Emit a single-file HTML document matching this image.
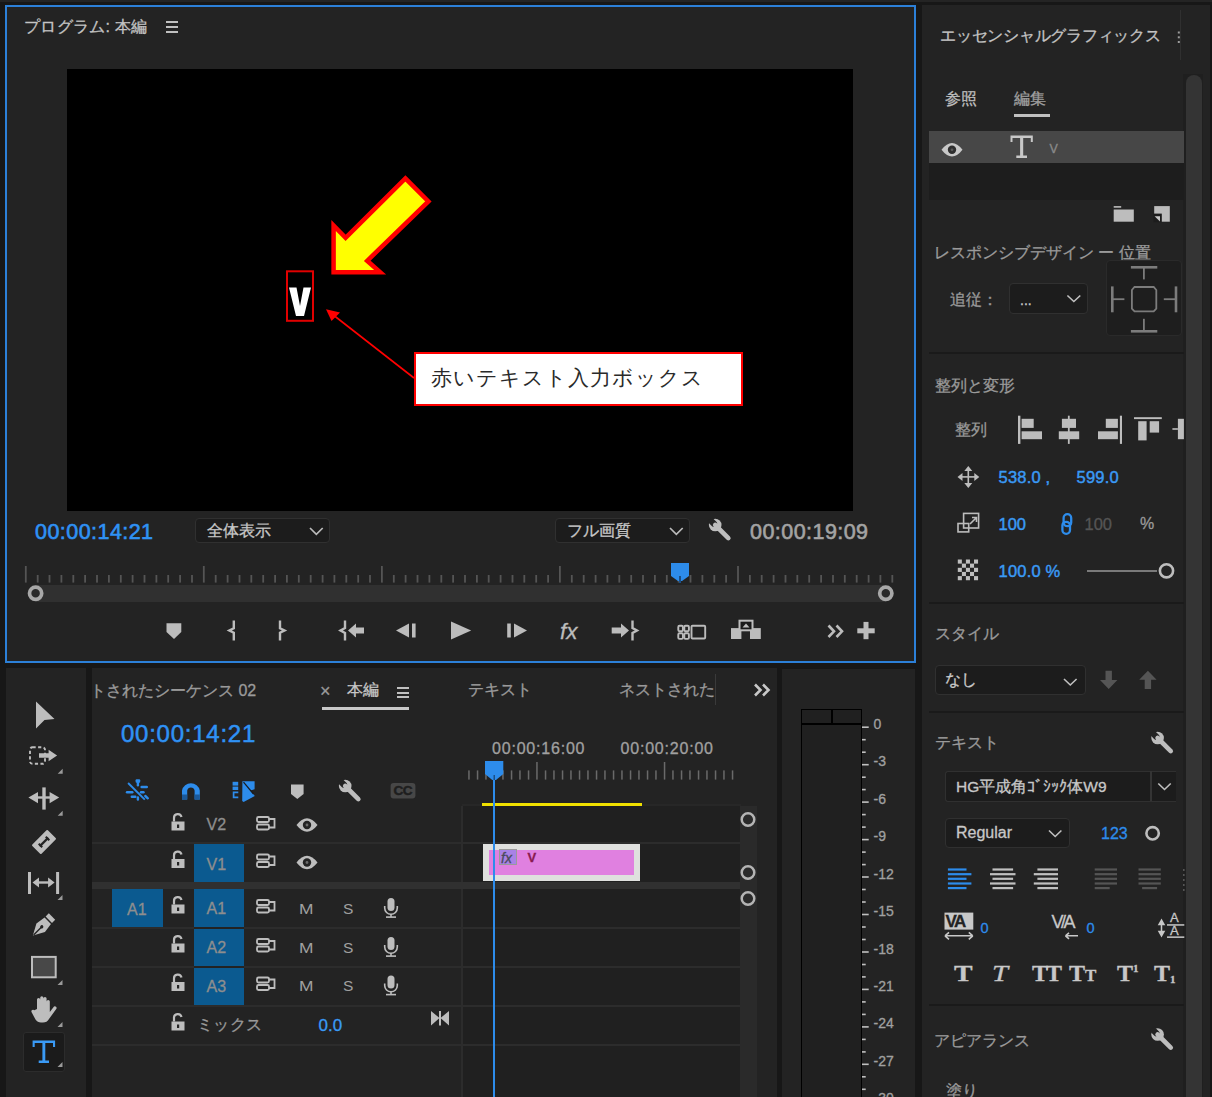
<!DOCTYPE html>
<html><head><meta charset="utf-8">
<style>
*{margin:0;padding:0;box-sizing:border-box}
html,body{width:1212px;height:1097px;overflow:hidden;background:#171717;font-family:"Liberation Sans",sans-serif;color:#9a9a9a}
.a{position:absolute}
.t{position:absolute;white-space:nowrap;line-height:1;-webkit-text-stroke-width:0.3px}
svg{position:absolute;overflow:visible;left:0;top:0}
.dd{position:absolute;background:#1c1c1c;border:1.5px solid #303030;border-radius:4px}
</style></head><body>

<div class="a" style="left:5px;top:4.5px;width:911px;height:658.5px;border:2px solid #2c80d8;background:#232323"></div>
<div class="t" style="left:24px;top:19px;font-size:16px;color:#c4c4c4;letter-spacing:0.3px">プログラム: 本編</div>
<div class="a" style="left:166px;top:21px;width:12px;height:2px;background:#c0c0c0"></div>
<div class="a" style="left:166px;top:26px;width:12px;height:2px;background:#c0c0c0"></div>
<div class="a" style="left:166px;top:31px;width:12px;height:2px;background:#c0c0c0"></div>
<div class="a" style="left:67px;top:69px;width:786px;height:442px;background:#000"></div>
<svg width="1212" height="1097">
<polygon points="405.4,178.4 428.4,201.4 367.2,260.8 380.2,272.3 333.6,272.3 333.6,225.5 345.6,237.8" fill="#ffff00" stroke="#ff0000" stroke-width="4.5" stroke-linejoin="miter" stroke-miterlimit="10"/>
<rect x="287" y="271.3" width="26" height="49.5" fill="none" stroke="#e00000" stroke-width="2"/>
<polygon points="289,287.5 296.5,287.5 300,306 303.5,287.5 311,287.5 304,316 296,316" fill="#ffffff"/>
<line x1="414" y1="378" x2="332" y2="314" stroke="#ff0000" stroke-width="1.6"/>
<polygon points="326,309.3 340,312.5 331.5,321" fill="#ff0000"/>
</svg>
<div class="a" style="left:414px;top:352px;width:329px;height:54px;background:#fff;border:2px solid #ff0000"></div>
<div class="t" style="left:431px;top:367px;font-size:21px;color:#2a2a2a;letter-spacing:1.0px;-webkit-text-stroke-width:0">赤いテキスト入力ボックス</div>
<div class="t" style="left:35px;top:522px;font-size:21.5px;color:#2f92f5;-webkit-text-stroke:0.6px #2f92f5;letter-spacing:0.45px">00:00:14:21</div>
<div class="t" style="left:750px;top:522px;font-size:21.5px;color:#a4a4a4;-webkit-text-stroke:0.6px #a4a4a4;letter-spacing:0.45px">00:00:19:09</div>
<div class="dd" style="left:195px;top:518px;width:135px;height:25px"></div>
<div class="t" style="left:207px;top:523px;font-size:15.5px;color:#c8c8c8">全体表示</div>
<div class="dd" style="left:555px;top:518px;width:135px;height:25px"></div>
<div class="t" style="left:567px;top:523px;font-size:15.5px;color:#c8c8c8">フル画質</div>
<svg width="1212" height="1097"><polyline points="310,528 316.35,534.3 322.7,528" fill="none" stroke="#bbbbbb" stroke-width="1.7"/></svg>
<svg width="1212" height="1097"><polyline points="670,528 676.35,534.3 682.7,528" fill="none" stroke="#bbbbbb" stroke-width="1.7"/></svg>
<svg width="1212" height="1097"><g transform="translate(715.2,525) rotate(45) scale(1.0)"><circle cx="0" cy="0" r="6.3" fill="#bdbdbd"/><path d="M-8,-3.1 H-1.8 Q1.3,-3.1 1.3,0 Q1.3,3.1 -1.8,3.1 H-8 Z" fill="#232323"/><line x1="0" y1="0" x2="18.6" y2="0" stroke="#bdbdbd" stroke-width="4.6" stroke-linecap="round"/></g></svg>
<svg width="1212" height="1097"><rect x="24.9" y="566" width="1.8" height="16.6" fill="#555555"/><rect x="36.8" y="575" width="1.8" height="7.6" fill="#555555"/><rect x="48.6" y="575" width="1.8" height="7.6" fill="#555555"/><rect x="60.5" y="575" width="1.8" height="7.6" fill="#555555"/><rect x="72.4" y="575" width="1.8" height="7.6" fill="#555555"/><rect x="84.2" y="575" width="1.8" height="7.6" fill="#555555"/><rect x="96.1" y="575" width="1.8" height="7.6" fill="#555555"/><rect x="108.0" y="575" width="1.8" height="7.6" fill="#555555"/><rect x="119.9" y="575" width="1.8" height="7.6" fill="#555555"/><rect x="131.7" y="575" width="1.8" height="7.6" fill="#555555"/><rect x="143.6" y="575" width="1.8" height="7.6" fill="#555555"/><rect x="155.5" y="575" width="1.8" height="7.6" fill="#555555"/><rect x="167.3" y="575" width="1.8" height="7.6" fill="#555555"/><rect x="179.2" y="575" width="1.8" height="7.6" fill="#555555"/><rect x="191.1" y="575" width="1.8" height="7.6" fill="#555555"/><rect x="202.9" y="566" width="1.8" height="16.6" fill="#555555"/><rect x="214.8" y="575" width="1.8" height="7.6" fill="#555555"/><rect x="226.7" y="575" width="1.8" height="7.6" fill="#555555"/><rect x="238.6" y="575" width="1.8" height="7.6" fill="#555555"/><rect x="250.4" y="575" width="1.8" height="7.6" fill="#555555"/><rect x="262.3" y="575" width="1.8" height="7.6" fill="#555555"/><rect x="274.2" y="575" width="1.8" height="7.6" fill="#555555"/><rect x="286.0" y="575" width="1.8" height="7.6" fill="#555555"/><rect x="297.9" y="575" width="1.8" height="7.6" fill="#555555"/><rect x="309.8" y="575" width="1.8" height="7.6" fill="#555555"/><rect x="321.7" y="575" width="1.8" height="7.6" fill="#555555"/><rect x="333.5" y="575" width="1.8" height="7.6" fill="#555555"/><rect x="345.4" y="575" width="1.8" height="7.6" fill="#555555"/><rect x="357.3" y="575" width="1.8" height="7.6" fill="#555555"/><rect x="369.1" y="575" width="1.8" height="7.6" fill="#555555"/><rect x="381.0" y="566" width="1.8" height="16.6" fill="#555555"/><rect x="392.9" y="575" width="1.8" height="7.6" fill="#555555"/><rect x="404.7" y="575" width="1.8" height="7.6" fill="#555555"/><rect x="416.6" y="575" width="1.8" height="7.6" fill="#555555"/><rect x="428.5" y="575" width="1.8" height="7.6" fill="#555555"/><rect x="440.4" y="575" width="1.8" height="7.6" fill="#555555"/><rect x="452.2" y="575" width="1.8" height="7.6" fill="#555555"/><rect x="464.1" y="575" width="1.8" height="7.6" fill="#555555"/><rect x="476.0" y="575" width="1.8" height="7.6" fill="#555555"/><rect x="487.8" y="575" width="1.8" height="7.6" fill="#555555"/><rect x="499.7" y="575" width="1.8" height="7.6" fill="#555555"/><rect x="511.6" y="575" width="1.8" height="7.6" fill="#555555"/><rect x="523.4" y="575" width="1.8" height="7.6" fill="#555555"/><rect x="535.3" y="575" width="1.8" height="7.6" fill="#555555"/><rect x="547.2" y="575" width="1.8" height="7.6" fill="#555555"/><rect x="559.0" y="566" width="1.8" height="16.6" fill="#555555"/><rect x="570.9" y="575" width="1.8" height="7.6" fill="#555555"/><rect x="582.8" y="575" width="1.8" height="7.6" fill="#555555"/><rect x="594.7" y="575" width="1.8" height="7.6" fill="#555555"/><rect x="606.5" y="575" width="1.8" height="7.6" fill="#555555"/><rect x="618.4" y="575" width="1.8" height="7.6" fill="#555555"/><rect x="630.3" y="575" width="1.8" height="7.6" fill="#555555"/><rect x="642.1" y="575" width="1.8" height="7.6" fill="#555555"/><rect x="654.0" y="575" width="1.8" height="7.6" fill="#555555"/><rect x="665.9" y="575" width="1.8" height="7.6" fill="#555555"/><rect x="677.7" y="575" width="1.8" height="7.6" fill="#555555"/><rect x="689.6" y="575" width="1.8" height="7.6" fill="#555555"/><rect x="701.5" y="575" width="1.8" height="7.6" fill="#555555"/><rect x="713.4" y="575" width="1.8" height="7.6" fill="#555555"/><rect x="725.2" y="575" width="1.8" height="7.6" fill="#555555"/><rect x="737.1" y="566" width="1.8" height="16.6" fill="#555555"/><rect x="749.0" y="575" width="1.8" height="7.6" fill="#555555"/><rect x="760.8" y="575" width="1.8" height="7.6" fill="#555555"/><rect x="772.7" y="575" width="1.8" height="7.6" fill="#555555"/><rect x="784.6" y="575" width="1.8" height="7.6" fill="#555555"/><rect x="796.4" y="575" width="1.8" height="7.6" fill="#555555"/><rect x="808.3" y="575" width="1.8" height="7.6" fill="#555555"/><rect x="820.2" y="575" width="1.8" height="7.6" fill="#555555"/><rect x="832.1" y="575" width="1.8" height="7.6" fill="#555555"/><rect x="843.9" y="575" width="1.8" height="7.6" fill="#555555"/><rect x="855.8" y="575" width="1.8" height="7.6" fill="#555555"/><rect x="867.7" y="575" width="1.8" height="7.6" fill="#555555"/><rect x="879.5" y="575" width="1.8" height="7.6" fill="#555555"/><rect x="891.4" y="575" width="1.8" height="7.6" fill="#555555"/></svg>
<svg width="1212" height="1097"><path d="M671,563 L689,563 L689,576 L682,581 L678,581 L671,576 Z" fill="#2d8ceb"/><rect x="679" y="576" width="2" height="7" fill="#1b4f85"/></svg>
<div class="a" style="left:35.6px;top:584.5px;width:850px;height:17px;background:#303030"></div>
<svg width="1212" height="1097"><circle cx="35.6" cy="593.3" r="6.1" fill="#2a2a2a" stroke="#a8a8a8" stroke-width="3.7"/><circle cx="885.8" cy="593.3" r="6.1" fill="#2a2a2a" stroke="#a8a8a8" stroke-width="3.7"/></svg>
<svg width="1212" height="1097"><g fill="#bcbcbc"><path d="M166.5,623.3 H181.3 V632 L174,639 L166.5,632 Z"/></g><g fill="none" stroke="#bcbcbc" stroke-width="2.4"><path d="M233.8,620.5 V628.3 L229.3,630.5 L233.8,632.7 V640.5"/><path d="M280,620.5 V628.3 L284.5,630.5 L280,632.7 V640.5"/><path d="M345,620.5 V628 L340.5,630.5 L345,633 V640.5"/><path d="M632.5,620.5 V628 L637,630.5 L632.5,633 V640.5"/></g><g fill="#bcbcbc"><path d="M348,630.5 L356,623.5 V627.5 H364 V633.5 H356 V637.5 Z"/><path d="M629,630.5 L621,623.5 V627.5 H611.7 V633.5 H621 V637.5 Z"/><path d="M396,630.5 L409,623.5 V637.5 Z"/><rect x="412" y="623.5" width="3.6" height="14"/><path d="M451,621.5 L471.2,630.5 L451,639.6 Z"/><rect x="507.2" y="623.5" width="3.6" height="14"/><path d="M514,623.5 L527,630.5 L514,637.5 Z"/></g></svg>
<div class="t" style="left:560px;top:621px;font-size:22.5px;font-style:italic;color:#bcbcbc">fx</div>
<svg width="1212" height="1097"><g fill="none" stroke="#bcbcbc" stroke-width="1.9">
<rect x="678.3" y="625.7" width="4.6" height="5.6" rx="1.2"/><rect x="684.3" y="625.7" width="4.6" height="5.6" rx="1.2"/><rect x="678.3" y="633.3" width="4.6" height="5.6" rx="1.2"/><rect x="684.3" y="633.3" width="4.6" height="5.6" rx="1.2"/>
<rect x="691.5" y="625.7" width="13.7" height="12.8" rx="1"/></g>

<g fill="#bcbcbc"><rect x="731" y="628.1" width="10.4" height="10.9"/><rect x="750" y="628.1" width="10.8" height="10.9"/></g>
<rect x="738.5" y="619.7" width="15" height="11.6" fill="#bcbcbc"/>
<rect x="740.5" y="621.7" width="11" height="7.6" fill="#1a1a1a"/>
<path d="M742.5,627.6 L746,623.6 L749.5,627.6 Z" fill="#bcbcbc"/>
</svg>
<svg width="1212" height="1097"><g fill="none" stroke="#bcbcbc" stroke-width="2.6">
<polyline points="828.5,625.5 834,631.3 828.5,637"/><polyline points="836.5,625.5 842,631.3 836.5,637"/></g>
<rect x="857.3" y="628.3" width="17.4" height="5" fill="#bcbcbc"/><rect x="863.5" y="621.9" width="5" height="17.3" fill="#bcbcbc"/>
</svg>
<div class="a" style="left:6px;top:668px;width:80px;height:429px;background:#232323"></div>
<svg width="1212" height="1097">
<path d="M36,701.5 L54.5,719 L44.5,720 L36,728.5 Z" fill="#bdbdbd"/>
<rect x="30" y="747.3" width="15" height="16.5" rx="2.5" fill="none" stroke="#bdbdbd" stroke-width="1.9" stroke-dasharray="3.2,2.4"/>
<path d="M39,753.3 H48.6 V749.8 L57.1,755.5 L48.6,761.2 V757.7 H39 Z" fill="#bdbdbd"/>
<path d="M57.7,773.7 L62.7,768.7 L62.7,773.7 Z" fill="#9a9a9a"/>
<path d="M28.4,797.6 L38,792 V803.3 Z M59.2,797.6 L49.6,792 V803.3 Z" fill="#bdbdbd"/>
<rect x="36" y="796.3" width="15" height="2.4" fill="#bdbdbd"/>
<rect x="42.3" y="787.4" width="3.4" height="22.2" fill="#bdbdbd"/>
<path d="M57.7,815.7 L62.7,810.7 L62.7,815.7 Z" fill="#9a9a9a"/>
<g transform="translate(44,842) rotate(45)"><rect x="-6.5" y="-11" width="13" height="22" rx="1" fill="#bdbdbd"/><rect x="-1.2" y="-6" width="2.4" height="12" fill="#232323"/><rect x="-2.5" y="-6" width="5" height="2" fill="#232323"/><rect x="-2.5" y="4" width="5" height="2" fill="#232323"/></g>
<rect x="28" y="872" width="3" height="22" fill="#bdbdbd"/><rect x="56.1" y="872" width="3" height="22" fill="#bdbdbd"/>
<path d="M32.5,882.5 L39,877.5 V887.5 Z M54.6,882.5 L48.1,877.5 V887.5 Z" fill="#bdbdbd"/>
<rect x="38" y="881.3" width="11" height="2.4" fill="#bdbdbd"/>
<path d="M57.5,900 L62.5,895 L62.5,900 Z" fill="#9a9a9a"/>
<g transform="translate(43.5,925) rotate(45)"><path d="M-4.5,-6 H4.5 L6,4 L0,15 L-6,4 Z" fill="#bdbdbd"/><rect x="-4.5" y="-12" width="9" height="4.5" fill="#bdbdbd"/><rect x="-0.7" y="1" width="1.4" height="13" fill="#232323"/><circle cx="0" cy="2.5" r="1.6" fill="#232323"/></g>
<rect x="32" y="956.9" width="23.7" height="20.4" fill="#484848" stroke="#bdbdbd" stroke-width="2"/>
<path d="M57.5,985 L62.5,980 L62.5,985 Z" fill="#9a9a9a"/>
<path d="M37,1009 V999.5 a1.6,1.6 0 0 1 3.2,0 V1007 V997.8 a1.6,1.6 0 0 1 3.2,0 V1007 V998.6 a1.6,1.6 0 0 1 3.2,0 V1008 V1001.5 a1.6,1.6 0 0 1 3.2,0 V1012 L54,1006.5 a1.7,1.7 0 0 1 2.4,2.2 L49,1019 Q47,1022.5 43,1022.5 H41 Q37.5,1022.5 35.5,1019.5 L31.5,1012 a1.7,1.7 0 0 1 2.8,-1.8 Z" fill="#bdbdbd"/>
<path d="M57.5,1027 L62.5,1022 L62.5,1027 Z" fill="#9a9a9a"/>
</svg>
<div class="a" style="left:23px;top:1032px;width:42px;height:40px;background:#1b1b1b;border:1px solid #2c2c2c;border-radius:3px"></div>
<svg width="1212" height="1097">
<path d="M32.6,1040.5 H55.1 V1047 H53 V1043 H45.3 V1060.5 H49 V1063 H38.7 V1060.5 H42.4 V1043 H34.7 V1047 H32.6 Z" fill="#3a9af5"/>
<path d="M57.5,1067 L62.5,1062 L62.5,1067 Z" fill="#9a9a9a"/>
</svg>
<div class="a" style="left:0;top:0;width:1212px;height:1.5px;background:#242424"></div>
<div class="a" style="left:92px;top:668px;width:684.5px;height:429px;background:#232323"></div>
<div class="t" style="left:90px;top:683px;font-size:16px;color:#9a9a9a">トされたシーケンス 02</div>
<div class="t" style="left:320px;top:682px;font-size:18px;color:#9a9a9a">×</div>
<div class="t" style="left:347px;top:682px;font-size:16px;color:#c8c8c8">本編</div>
<div class="a" style="left:397px;top:687px;width:12px;height:2px;background:#c0c0c0"></div>
<div class="a" style="left:397px;top:691.5px;width:12px;height:2px;background:#c0c0c0"></div>
<div class="a" style="left:397px;top:696px;width:12px;height:2px;background:#c0c0c0"></div>
<div class="a" style="left:322px;top:707px;width:87px;height:3px;background:#c8c8c8"></div>
<div class="t" style="left:468px;top:682px;font-size:16px;color:#9a9a9a">テキスト</div>
<div class="a" style="left:619px;top:674px;width:96px;height:32px;overflow:hidden"><div class="t" style="left:0;top:8px;font-size:16px;color:#9a9a9a">ネストされたシ</div></div>
<div class="a" style="left:715px;top:674px;width:1px;height:31px;background:#3a3a3a"></div>
<svg width="1212" height="1097"><g fill="none" stroke="#c8c8c8" stroke-width="2.6">
<polyline points="755,684.5 760.5,690 755,695.5"/><polyline points="763,684.5 768.5,690 763,695.5"/></g></svg>
<div class="t" style="left:121px;top:721.5px;font-size:24px;color:#2f92f5;letter-spacing:0.75px;-webkit-text-stroke:0.5px #2f92f5">00:00:14:21</div>
<svg width="1212" height="1097">
<g stroke="#2d8ceb" stroke-width="2.4" stroke-linecap="round" fill="none">
<line x1="137.9" y1="781.5" x2="137.9" y2="785.3"/>
<line x1="141.6" y1="787" x2="146.8" y2="787"/>
<line x1="127" y1="792.2" x2="132.3" y2="792.2"/>
<line x1="141" y1="792.2" x2="143.5" y2="792.2"/>
<line x1="131.8" y1="796.8" x2="135.3" y2="796.8"/>
<line x1="137.9" y1="797.5" x2="137.9" y2="799.5"/>
<line x1="145.3" y1="796" x2="147.8" y2="798.3"/>
</g>
<rect x="135.6" y="779.3" width="4.6" height="3.4" rx="1" fill="#2d8ceb"/>
<line x1="128.1" y1="783" x2="144.8" y2="799.7" stroke="#2d8ceb" stroke-width="1.9"/>
<path d="M182,799.5 V790.5 A9.1,9.1 0 0 1 199.8,790.5 V799.5 H194.6 V790.5 A3.8,3.8 0 0 0 187.2,790.5 V799.5 Z" fill="#2d8ceb"/>
<rect x="182" y="794.5" width="5.2" height="5" fill="#1b5a9c"/><rect x="194.6" y="794.5" width="5.2" height="5" fill="#1b5a9c"/>
<rect x="232.6" y="781.8" width="5.6" height="3.8" fill="#2d8ceb"/><rect x="232.6" y="786.6" width="5.6" height="3.4" fill="#2d8ceb"/>
<path d="M238.3,792.3 H233.6 V797.3 H238.3" fill="none" stroke="#2d8ceb" stroke-width="1.7"/>
<path d="M242.4,781.2 H254.6 V789.3 L250.5,790.5 L254.8,796 L243.6,802 L242.2,801 Z" fill="#2d8ceb"/>
<line x1="243.5" y1="782.2" x2="253.5" y2="794" stroke="#1a1a1a" stroke-width="1.2"/>
<path d="M291,784.4 H303.6 V794 L297.3,799 L291,794 Z" fill="#bdbdbd"/>
<rect x="390.6" y="783.1" width="24.8" height="15.3" rx="3" fill="#474747"/>
</svg>
<svg width="1212" height="1097"><g transform="translate(345.2,786) rotate(45) scale(1.0)"><circle cx="0" cy="0" r="6.3" fill="#bdbdbd"/><path d="M-8,-3.1 H-1.8 Q1.3,-3.1 1.3,0 Q1.3,3.1 -1.8,3.1 H-8 Z" fill="#232323"/><line x1="0" y1="0" x2="18.6" y2="0" stroke="#bdbdbd" stroke-width="4.6" stroke-linecap="round"/></g></svg>
<div class="t" style="left:393.5px;top:784px;font-size:13.5px;font-weight:bold;color:#1e1e1e;letter-spacing:-0.5px;-webkit-text-stroke:0.5px #1e1e1e">CC</div>
<div class="t" style="left:492px;top:741px;font-size:16px;color:#a0a0a0;letter-spacing:0.8px">00:00:16:00</div>
<div class="t" style="left:620.5px;top:741px;font-size:16px;color:#a0a0a0;letter-spacing:0.8px">00:00:20:00</div>
<svg width="1212" height="1097"><rect x="468.2" y="770.4" width="1.5" height="9.2" fill="#6a6a6a"/><rect x="476.8" y="770.4" width="1.5" height="9.2" fill="#6a6a6a"/><rect x="485.2" y="770.4" width="1.5" height="9.2" fill="#6a6a6a"/><rect x="493.8" y="770.4" width="1.5" height="9.2" fill="#6a6a6a"/><rect x="502.2" y="770.4" width="1.5" height="9.2" fill="#6a6a6a"/><rect x="510.8" y="770.4" width="1.5" height="9.2" fill="#6a6a6a"/><rect x="519.2" y="770.4" width="1.5" height="9.2" fill="#6a6a6a"/><rect x="527.8" y="770.4" width="1.5" height="9.2" fill="#6a6a6a"/><rect x="536.2" y="762" width="1.5" height="17.6" fill="#6a6a6a"/><rect x="544.8" y="770.4" width="1.5" height="9.2" fill="#6a6a6a"/><rect x="553.2" y="770.4" width="1.5" height="9.2" fill="#6a6a6a"/><rect x="561.8" y="770.4" width="1.5" height="9.2" fill="#6a6a6a"/><rect x="570.2" y="770.4" width="1.5" height="9.2" fill="#6a6a6a"/><rect x="578.8" y="770.4" width="1.5" height="9.2" fill="#6a6a6a"/><rect x="587.2" y="770.4" width="1.5" height="9.2" fill="#6a6a6a"/><rect x="595.8" y="770.4" width="1.5" height="9.2" fill="#6a6a6a"/><rect x="604.2" y="770.4" width="1.5" height="9.2" fill="#6a6a6a"/><rect x="612.8" y="770.4" width="1.5" height="9.2" fill="#6a6a6a"/><rect x="621.2" y="770.4" width="1.5" height="9.2" fill="#6a6a6a"/><rect x="629.8" y="770.4" width="1.5" height="9.2" fill="#6a6a6a"/><rect x="638.2" y="770.4" width="1.5" height="9.2" fill="#6a6a6a"/><rect x="646.8" y="770.4" width="1.5" height="9.2" fill="#6a6a6a"/><rect x="655.2" y="770.4" width="1.5" height="9.2" fill="#6a6a6a"/><rect x="663.8" y="762" width="1.5" height="17.6" fill="#6a6a6a"/><rect x="672.2" y="770.4" width="1.5" height="9.2" fill="#6a6a6a"/><rect x="680.8" y="770.4" width="1.5" height="9.2" fill="#6a6a6a"/><rect x="689.2" y="770.4" width="1.5" height="9.2" fill="#6a6a6a"/><rect x="697.8" y="770.4" width="1.5" height="9.2" fill="#6a6a6a"/><rect x="706.2" y="770.4" width="1.5" height="9.2" fill="#6a6a6a"/><rect x="714.8" y="770.4" width="1.5" height="9.2" fill="#6a6a6a"/><rect x="723.2" y="770.4" width="1.5" height="9.2" fill="#6a6a6a"/><rect x="731.8" y="770.4" width="1.5" height="9.2" fill="#6a6a6a"/></svg>
<div class="a" style="left:92px;top:806px;width:371px;height:291px;background:#232323"></div>
<div class="a" style="left:462px;top:806px;width:279px;height:291px;background:#202020"></div>
<div class="a" style="left:460.6px;top:805.8px;width:2px;height:291px;background:#2c2c2c"></div>
<div class="a" style="left:462px;top:804.2px;width:279px;height:1.6px;background:#272727"></div>
<div class="a" style="left:92px;top:842px;width:649px;height:1.7px;background:#2c2c2c"></div>
<div class="a" style="left:92px;top:927px;width:649px;height:1.7px;background:#2c2c2c"></div>
<div class="a" style="left:92px;top:966px;width:649px;height:1.7px;background:#2c2c2c"></div>
<div class="a" style="left:92px;top:1005px;width:649px;height:1.7px;background:#2c2c2c"></div>
<div class="a" style="left:92px;top:1044px;width:649px;height:1.7px;background:#2c2c2c"></div>
<div class="a" style="left:92px;top:881.5px;width:665px;height:7px;background:#303030"></div>
<div class="a" style="left:194px;top:843.5px;width:50px;height:38px;background:#0b5a90"></div>
<div class="a" style="left:112px;top:889px;width:50.5px;height:37.5px;background:#0b5a90"></div>
<div class="a" style="left:194px;top:889px;width:50px;height:115.5px;background:#0b5a90"></div>
<div class="a" style="left:194px;top:927px;width:50px;height:1.5px;background:#232323"></div>
<div class="a" style="left:194px;top:966px;width:50px;height:1.5px;background:#232323"></div>
<svg width="1212" height="1097"><path d="M174.0,821.5 V818.0 A3.8,3.8 0 0 1 181.5,817.0" fill="none" stroke="#bdbdbd" stroke-width="2.2"/><rect x="171.5" y="821.5" width="13" height="9" fill="#bdbdbd"/><rect x="177.0" y="824.5" width="2.2" height="3.5" fill="#232323"/><g fill="none" stroke="#bdbdbd" stroke-width="1.8"><rect x="257" y="817.0" width="12" height="5" rx="1.5"/><rect x="257" y="824.5" width="12" height="5" rx="1.5"/><path d="M269,819.0 H274.5 V827.5 H269"/></g><path d="M296.5,825.0 Q307.0,811.5 317.5,825.0 Q307.0,838.5 296.5,825.0 Z" fill="#bdbdbd"/><circle cx="307.0" cy="825.0" r="4.2" fill="#232323"/><circle cx="307.0" cy="825.0" r="1.4" fill="#6a6a6a"/><path d="M174.0,859.0 V855.5 A3.8,3.8 0 0 1 181.5,854.5" fill="none" stroke="#bdbdbd" stroke-width="2.2"/><rect x="171.5" y="859.0" width="13" height="9" fill="#bdbdbd"/><rect x="177.0" y="862.0" width="2.2" height="3.5" fill="#232323"/><g fill="none" stroke="#bdbdbd" stroke-width="1.8"><rect x="257" y="854.5" width="12" height="5" rx="1.5"/><rect x="257" y="862.0" width="12" height="5" rx="1.5"/><path d="M269,856.5 H274.5 V865.0 H269"/></g><path d="M296.5,862.5 Q307.0,849.0 317.5,862.5 Q307.0,876.0 296.5,862.5 Z" fill="#bdbdbd"/><circle cx="307.0" cy="862.5" r="4.2" fill="#232323"/><circle cx="307.0" cy="862.5" r="1.4" fill="#6a6a6a"/><path d="M174.0,904.5 V901.0 A3.8,3.8 0 0 1 181.5,900.0" fill="none" stroke="#bdbdbd" stroke-width="2.2"/><rect x="171.5" y="904.5" width="13" height="9" fill="#bdbdbd"/><rect x="177.0" y="907.5" width="2.2" height="3.5" fill="#232323"/><g fill="none" stroke="#bdbdbd" stroke-width="1.8"><rect x="257" y="900.0" width="12" height="5" rx="1.5"/><rect x="257" y="907.5" width="12" height="5" rx="1.5"/><path d="M269,902.0 H274.5 V910.5 H269"/></g><rect x="387.5" y="898.0" width="7" height="13" rx="3.5" fill="#bdbdbd"/><path d="M384.7,906.0 V908.0 A6.3,6.3 0 0 0 397.3,908.0 V906.0" fill="none" stroke="#bdbdbd" stroke-width="1.6"/><rect x="390.2" y="914.0" width="1.6" height="3" fill="#bdbdbd"/><rect x="386.0" y="916.3" width="10" height="1.6" fill="#bdbdbd"/><path d="M174.0,943.5 V940.0 A3.8,3.8 0 0 1 181.5,939.0" fill="none" stroke="#bdbdbd" stroke-width="2.2"/><rect x="171.5" y="943.5" width="13" height="9" fill="#bdbdbd"/><rect x="177.0" y="946.5" width="2.2" height="3.5" fill="#232323"/><g fill="none" stroke="#bdbdbd" stroke-width="1.8"><rect x="257" y="939.0" width="12" height="5" rx="1.5"/><rect x="257" y="946.5" width="12" height="5" rx="1.5"/><path d="M269,941.0 H274.5 V949.5 H269"/></g><rect x="387.5" y="937.0" width="7" height="13" rx="3.5" fill="#bdbdbd"/><path d="M384.7,945.0 V947.0 A6.3,6.3 0 0 0 397.3,947.0 V945.0" fill="none" stroke="#bdbdbd" stroke-width="1.6"/><rect x="390.2" y="953.0" width="1.6" height="3" fill="#bdbdbd"/><rect x="386.0" y="955.3" width="10" height="1.6" fill="#bdbdbd"/><path d="M174.0,982.0 V978.5 A3.8,3.8 0 0 1 181.5,977.5" fill="none" stroke="#bdbdbd" stroke-width="2.2"/><rect x="171.5" y="982.0" width="13" height="9" fill="#bdbdbd"/><rect x="177.0" y="985.0" width="2.2" height="3.5" fill="#232323"/><g fill="none" stroke="#bdbdbd" stroke-width="1.8"><rect x="257" y="977.5" width="12" height="5" rx="1.5"/><rect x="257" y="985.0" width="12" height="5" rx="1.5"/><path d="M269,979.5 H274.5 V988.0 H269"/></g><rect x="387.5" y="975.5" width="7" height="13" rx="3.5" fill="#bdbdbd"/><path d="M384.7,983.5 V985.5 A6.3,6.3 0 0 0 397.3,985.5 V983.5" fill="none" stroke="#bdbdbd" stroke-width="1.6"/><rect x="390.2" y="991.5" width="1.6" height="3" fill="#bdbdbd"/><rect x="386.0" y="993.8" width="10" height="1.6" fill="#bdbdbd"/><path d="M174.0,1021.5 V1018.0 A3.8,3.8 0 0 1 181.5,1017.0" fill="none" stroke="#bdbdbd" stroke-width="2.2"/><rect x="171.5" y="1021.5" width="13" height="9" fill="#bdbdbd"/><rect x="177.0" y="1024.5" width="2.2" height="3.5" fill="#232323"/></svg>
<div class="t" style="left:206.5px;top:817.2px;font-size:16px;color:#8e8e8e">V2</div>
<div class="t" style="left:206.5px;top:856.5px;font-size:16px;color:#8e8e8e">V1</div>
<div class="t" style="left:206.5px;top:901.0px;font-size:16px;color:#8e8e8e">A1</div>
<div class="t" style="left:299px;top:900.5px;font-size:15.5px;color:#a0a0a0;-webkit-text-stroke-width:0;transform:scaleX(1.12);transform-origin:0 0">M</div>
<div class="t" style="left:343px;top:900.5px;font-size:15.5px;color:#a0a0a0;-webkit-text-stroke-width:0">S</div>
<div class="t" style="left:206.5px;top:940.0px;font-size:16px;color:#8e8e8e">A2</div>
<div class="t" style="left:299px;top:939.5px;font-size:15.5px;color:#a0a0a0;-webkit-text-stroke-width:0;transform:scaleX(1.12);transform-origin:0 0">M</div>
<div class="t" style="left:343px;top:939.5px;font-size:15.5px;color:#a0a0a0;-webkit-text-stroke-width:0">S</div>
<div class="t" style="left:206.5px;top:978.5px;font-size:16px;color:#8e8e8e">A3</div>
<div class="t" style="left:299px;top:978.0px;font-size:15.5px;color:#a0a0a0;-webkit-text-stroke-width:0;transform:scaleX(1.12);transform-origin:0 0">M</div>
<div class="t" style="left:343px;top:978.0px;font-size:15.5px;color:#a0a0a0;-webkit-text-stroke-width:0">S</div>
<div class="t" style="left:127px;top:901.5px;font-size:16px;color:#8e8e8e">A1</div>
<div class="t" style="left:197px;top:1017px;font-size:16px;color:#9a9a9a;letter-spacing:0.3px">ミックス</div>
<div class="t" style="left:318.5px;top:1017px;font-size:17px;color:#3a9af5">0.0</div>
<svg width="1212" height="1097"><path d="M431,1011 L439.5,1018 L431,1025.5 Z M449,1011 L440.5,1018 L449,1025.5 Z" fill="#bdbdbd"/><rect x="439" y="1011" width="2" height="14.5" fill="#bdbdbd"/></svg>
<div class="a" style="left:740px;top:806px;width:17px;height:291px;background:#2a2a2a"></div>
<svg width="1212" height="1097"><circle cx="748" cy="819.5" r="6.3" fill="#2a2a2a" stroke="#b4b4b4" stroke-width="2.5"/><circle cx="748" cy="872.5" r="6.3" fill="#2a2a2a" stroke="#b4b4b4" stroke-width="2.5"/><circle cx="748" cy="898.5" r="6.3" fill="#2a2a2a" stroke="#b4b4b4" stroke-width="2.5"/></svg>
<div class="a" style="left:482px;top:802.5px;width:160px;height:3.5px;background:#f0e000"></div>
<div class="a" style="left:482.5px;top:843.7px;width:157.8px;height:37.5px;background:#dfe0de"></div>
<div class="a" style="left:488.7px;top:849.9px;width:145.4px;height:24.8px;background:#e080e0"></div>
<div class="a" style="left:498.8px;top:849.1px;width:18.4px;height:16.2px;background:#a882e6;border:1px solid #9a9a9a"></div>
<div class="t" style="left:501px;top:850.5px;font-size:14px;font-style:italic;color:#4a4a5a">fx</div>
<div class="t" style="left:527.5px;top:850.5px;font-size:13px;font-weight:bold;color:#8a1a50">V</div>
<div class="a" style="left:493.3px;top:770px;width:2px;height:327px;background:#2d8ceb"></div>
<svg width="1212" height="1097"><path d="M485,761 H503.3 V774 L496,780 H492.3 L485,774 Z" fill="#2d8ceb"/><rect x="493.5" y="775" width="1.5" height="5" fill="#1b4f85"/></svg>
<div class="a" style="left:782px;top:668.5px;width:132.7px;height:429px;background:#232323"></div>
<div class="a" style="left:801.4px;top:709.4px;width:60.7px;height:400px;background:#202020;border:1.6px solid #000"></div>
<div class="a" style="left:801.4px;top:723.3px;width:60.7px;height:1.6px;background:#000"></div>
<div class="a" style="left:830.8px;top:709.4px;width:1.8px;height:15px;background:#000"></div>
<svg width="1212" height="1097"><rect x="862" y="726.4" width="6.7" height="1.6" fill="#c0c0c0"/><rect x="862" y="738.9" width="3.7" height="1.6" fill="#c0c0c0"/><rect x="862" y="751.4" width="3.7" height="1.6" fill="#c0c0c0"/><rect x="862" y="763.9" width="6.7" height="1.6" fill="#c0c0c0"/><rect x="862" y="776.4" width="3.7" height="1.6" fill="#c0c0c0"/><rect x="862" y="788.8" width="3.7" height="1.6" fill="#c0c0c0"/><rect x="862" y="801.3" width="6.7" height="1.6" fill="#c0c0c0"/><rect x="862" y="813.8" width="3.7" height="1.6" fill="#c0c0c0"/><rect x="862" y="826.3" width="3.7" height="1.6" fill="#c0c0c0"/><rect x="862" y="838.8" width="6.7" height="1.6" fill="#c0c0c0"/><rect x="862" y="851.3" width="3.7" height="1.6" fill="#c0c0c0"/><rect x="862" y="863.8" width="3.7" height="1.6" fill="#c0c0c0"/><rect x="862" y="876.2" width="6.7" height="1.6" fill="#c0c0c0"/><rect x="862" y="888.7" width="3.7" height="1.6" fill="#c0c0c0"/><rect x="862" y="901.2" width="3.7" height="1.6" fill="#c0c0c0"/><rect x="862" y="913.7" width="6.7" height="1.6" fill="#c0c0c0"/><rect x="862" y="926.2" width="3.7" height="1.6" fill="#c0c0c0"/><rect x="862" y="938.7" width="3.7" height="1.6" fill="#c0c0c0"/><rect x="862" y="951.2" width="6.7" height="1.6" fill="#c0c0c0"/><rect x="862" y="963.7" width="3.7" height="1.6" fill="#c0c0c0"/><rect x="862" y="976.1" width="3.7" height="1.6" fill="#c0c0c0"/><rect x="862" y="988.6" width="6.7" height="1.6" fill="#c0c0c0"/><rect x="862" y="1001.1" width="3.7" height="1.6" fill="#c0c0c0"/><rect x="862" y="1013.6" width="3.7" height="1.6" fill="#c0c0c0"/><rect x="862" y="1026.1" width="6.7" height="1.6" fill="#c0c0c0"/><rect x="862" y="1038.6" width="3.7" height="1.6" fill="#c0c0c0"/><rect x="862" y="1051.1" width="3.7" height="1.6" fill="#c0c0c0"/><rect x="862" y="1063.5" width="6.7" height="1.6" fill="#c0c0c0"/><rect x="862" y="1076.0" width="3.7" height="1.6" fill="#c0c0c0"/><rect x="862" y="1088.5" width="3.7" height="1.6" fill="#c0c0c0"/><rect x="862" y="1101.0" width="6.7" height="1.6" fill="#c0c0c0"/><rect x="862" y="1113.5" width="3.7" height="1.6" fill="#c0c0c0"/><rect x="862" y="1126.0" width="3.7" height="1.6" fill="#c0c0c0"/></svg>
<div class="t" style="left:873.5px;top:716.7px;font-size:14px;color:#a0a0a0">0</div>
<div class="t" style="left:873.5px;top:754.2px;font-size:14px;color:#a0a0a0">-3</div>
<div class="t" style="left:873.5px;top:791.6px;font-size:14px;color:#a0a0a0">-6</div>
<div class="t" style="left:873.5px;top:829.1px;font-size:14px;color:#a0a0a0">-9</div>
<div class="t" style="left:873.5px;top:866.5px;font-size:14px;color:#a0a0a0">-12</div>
<div class="t" style="left:873.5px;top:904.0px;font-size:14px;color:#a0a0a0">-15</div>
<div class="t" style="left:873.5px;top:941.5px;font-size:14px;color:#a0a0a0">-18</div>
<div class="t" style="left:873.5px;top:978.9px;font-size:14px;color:#a0a0a0">-21</div>
<div class="t" style="left:873.5px;top:1016.4px;font-size:14px;color:#a0a0a0">-24</div>
<div class="t" style="left:873.5px;top:1053.8px;font-size:14px;color:#a0a0a0">-27</div>
<div class="t" style="left:873.5px;top:1091.3px;font-size:14px;color:#a0a0a0">-30</div>
<div class="a" style="left:921.8px;top:5px;width:288.2px;height:1092px;background:#232323"></div>
<div class="t" style="left:940px;top:28px;font-size:16px;color:#c4c4c4;letter-spacing:-0.25px">エッセンシャルグラフィックス</div>
<div class="a" style="left:1179.5px;top:10px;width:1px;height:50px;background:#303030"></div>
<svg width="1212" height="1097"><g fill="#9c9c9c"><rect x="1177.8" y="31.5" width="2" height="2"/><rect x="1177.8" y="36.3" width="2" height="2"/><rect x="1177.8" y="41" width="2" height="2"/></g></svg>
<div class="a" style="left:1183.4px;top:74px;width:19.7px;height:1023px;background:#1f1f1f"></div>
<div class="a" style="left:1185.5px;top:75px;width:16.1px;height:1022px;background:#343434;border-radius:8px 8px 0 0"></div>
<div class="t" style="left:945px;top:91px;font-size:16px;color:#bdbdbd">参照</div>
<div class="t" style="left:1014px;top:91px;font-size:16px;color:#a0a0a0">編集</div>
<div class="a" style="left:1013.5px;top:114px;width:36px;height:2.8px;background:#c0c0c0"></div>
<div class="a" style="left:929px;top:130.5px;width:255px;height:32px;background:#474747"></div>
<div class="a" style="left:929px;top:162.5px;width:255px;height:37px;background:#1d1d1d"></div>
<svg width="1212" height="1097"><path d="M941.5,149.8 Q952.0,136.3 962.5,149.8 Q952.0,163.3 941.5,149.8 Z" fill="#c8c8c8"/><circle cx="952.0" cy="149.8" r="4.2" fill="#2e2e2e"/><circle cx="952.0" cy="149.8" r="1.4" fill="#5a5a5a"/></svg>
<svg width="1212" height="1097"><path d="M1010.5,135.6 H1032.8 V142 H1030.8 V138 H1023.2 V155.5 H1027 V158 H1016.3 V155.5 H1020.1 V138 H1012.5 V142 H1010.5 Z" fill="#c8c8c8"/></svg>
<div class="t" style="left:1049.5px;top:142.5px;font-size:12.5px;color:#8a8a8a">V</div>
<svg width="1212" height="1097"><rect x="1113.7" y="206.1" width="7.5" height="1.6" fill="#bdbdbd"/><rect x="1113.7" y="209.5" width="20.1" height="12.2" fill="#bdbdbd"/><rect x="1154.2" y="206.1" width="15.6" height="15.6" fill="#bdbdbd"/><rect x="1153.5" y="213.6" width="8.3" height="8.6" fill="#1c1c1c"/><path d="M1154.6,216.2 H1160 V221.6 Z" fill="#c8c8c8"/></svg>
<div class="t" style="left:934px;top:245px;font-size:16px;color:#9a9a9a">レスポンシブデザイン ー 位置</div>
<div class="t" style="left:950px;top:291.5px;font-size:16px;color:#9a9a9a">追従：</div>
<div class="dd" style="left:1009px;top:283px;width:79px;height:31px"></div>
<div class="t" style="left:1020px;top:293px;font-size:14px;color:#c8c8c8">...</div>
<svg width="1212" height="1097"><polyline points="1067.4,295.5 1073.8500000000001,301.5 1080.3000000000002,295.5" fill="none" stroke="#c0c0c0" stroke-width="1.6"/></svg>
<div class="a" style="left:1105.8px;top:260.4px;width:76.6px;height:75.3px;background:#1e1e1e;border:1px solid #2a2a2a;border-radius:4px"></div>
<svg width="1212" height="1097"><g fill="#7c7c7c">
<rect x="1130.9" y="266" width="26.4" height="2.6"/><rect x="1143" y="268" width="1.8" height="11.4"/>
<rect x="1130.9" y="330" width="26.4" height="2.6"/><rect x="1143" y="318.8" width="1.8" height="11.4"/>
<rect x="1111" y="286.4" width="2.6" height="25.9"/><rect x="1113" y="298.3" width="11.4" height="1.8"/>
<rect x="1174.7" y="286.4" width="2.6" height="25.9"/><rect x="1163.8" y="298.3" width="11.4" height="1.8"/>
</g><path d="M1134.5,287 H1153.7 L1156.3,290 V308.6 L1153.7,311.3 H1134.5 L1131.9,308.6 V290 Z" fill="none" stroke="#7c7c7c" stroke-width="1.8"/></svg>
<div class="a" style="left:929px;top:351.5px;width:255px;height:2px;background:#1a1a1a"></div>
<div class="t" style="left:935px;top:378px;font-size:16px;color:#9a9a9a">整列と変形</div>
<div class="t" style="left:955px;top:422px;font-size:16px;color:#9a9a9a">整列</div>
<svg width="1212" height="1097"><g fill="#bdbdbd">
<rect x="1018" y="415.7" width="2.4" height="28.2"/><rect x="1021.6" y="418.8" width="12.1" height="9.1"/><rect x="1021.6" y="431.3" width="20.4" height="7.9"/>
<rect x="1067.9" y="415.7" width="1.8" height="28.2"/><rect x="1061.9" y="418.8" width="14.1" height="9.1"/><rect x="1058.8" y="431.3" width="20.4" height="7.9"/>
<rect x="1119.9" y="415.7" width="2.1" height="28.2"/><rect x="1105.8" y="418.8" width="12.1" height="9.1"/><rect x="1098" y="431.3" width="19.9" height="7.9"/>
<rect x="1134" y="417.2" width="27.8" height="1.9"/><rect x="1138.2" y="421.2" width="8.4" height="19.2"/><rect x="1149.7" y="421.2" width="9.4" height="11.4"/>
<rect x="1172.4" y="428.2" width="5.5" height="1.6"/><rect x="1177.9" y="418.8" width="6" height="20.4"/>
</g></svg>
<svg width="1212" height="1097"><g fill="#bdbdbd">
<rect x="967.5" y="470" width="1.6" height="14"/><rect x="961.5" y="476.1" width="14" height="1.6"/>
<path d="M968.3,466 L972.3,471 H964.3 Z M968.3,488 L972.3,483 H964.3 Z M957.5,476.9 L962.5,472.9 V480.9 Z M979.3,476.9 L974.3,472.9 V480.9 Z"/>
</g>
<g fill="none" stroke="#bdbdbd" stroke-width="1.6">
<rect x="963.6" y="513.4" width="15" height="14.6"/><rect x="958" y="523.5" width="10.7" height="8.4"/>
<path d="M970,524 L976,518 M972,517.5 H976.5 V522"/>
</g>
<g fill="#bdbdbd"><rect x="957.8" y="559.5" width="4.06" height="4.14"/><rect x="965.9" y="559.5" width="4.06" height="4.14"/><rect x="974.0" y="559.5" width="4.06" height="4.14"/><rect x="961.9" y="563.6" width="4.06" height="4.14"/><rect x="970.0" y="563.6" width="4.06" height="4.14"/><rect x="957.8" y="567.8" width="4.06" height="4.14"/><rect x="965.9" y="567.8" width="4.06" height="4.14"/><rect x="974.0" y="567.8" width="4.06" height="4.14"/><rect x="961.9" y="571.9" width="4.06" height="4.14"/><rect x="970.0" y="571.9" width="4.06" height="4.14"/><rect x="957.8" y="576.1" width="4.06" height="4.14"/><rect x="965.9" y="576.1" width="4.06" height="4.14"/><rect x="974.0" y="576.1" width="4.06" height="4.14"/></g>
<rect x="1063.6" y="514.2" width="7.6" height="12" rx="3.8" fill="none" stroke="#2d8ceb" stroke-width="2.3"/><rect x="1062.4" y="521.8" width="7.6" height="12" rx="3.8" fill="none" stroke="#2d8ceb" stroke-width="2.3"/>
</svg>
<div class="t" style="left:998.5px;top:468.5px;font-size:16.5px;color:#3a9af5;letter-spacing:0.2px;-webkit-text-stroke:0.45px #3a9af5">538.0 ,</div>
<div class="t" style="left:1076.5px;top:468.5px;font-size:16.5px;color:#3a9af5;letter-spacing:0.2px;-webkit-text-stroke:0.45px #3a9af5">599.0</div>
<div class="t" style="left:998.5px;top:515.5px;font-size:16.5px;color:#3a9af5;-webkit-text-stroke:0.45px #3a9af5">100</div>
<div class="t" style="left:1084.5px;top:515.5px;font-size:16.5px;color:#555">100</div>
<div class="t" style="left:1140px;top:516px;font-size:16px;color:#9a9a9a">%</div>
<div class="t" style="left:998.5px;top:562.5px;font-size:16.5px;color:#3a9af5;-webkit-text-stroke:0.45px #3a9af5;letter-spacing:0.2px">100.0 %</div>
<div class="a" style="left:1087px;top:569.5px;width:70px;height:2px;background:#7a7a7a"></div>
<svg width="1212" height="1097"><circle cx="1166.5" cy="570.8" r="6.6" fill="#232323" stroke="#bdbdbd" stroke-width="2.6"/></svg>
<div class="a" style="left:929px;top:601.5px;width:255px;height:2px;background:#1a1a1a"></div>
<div class="t" style="left:935px;top:626px;font-size:16px;color:#9a9a9a">スタイル</div>
<div class="dd" style="left:935px;top:665px;width:150.5px;height:30px"></div>
<div class="t" style="left:945px;top:672px;font-size:16px;color:#c8c8c8">なし</div>
<svg width="1212" height="1097"><polyline points="1064,679 1070.3,685 1076.6,679" fill="none" stroke="#c0c0c0" stroke-width="1.6"/></svg>
<svg width="1212" height="1097"><path d="M1105.5,670.8 H1111.9 V680 H1117.4 L1108.7,688.9 L1100,680 H1105.5 Z" fill="#555"/><path d="M1144.7,688.9 H1151.1 V679.7 H1156.6 L1147.9,670.8 L1139.2,679.7 H1144.7 Z" fill="#555"/></svg>
<div class="a" style="left:929px;top:710.5px;width:255px;height:2px;background:#1a1a1a"></div>
<div class="t" style="left:935px;top:735px;font-size:16px;color:#9a9a9a">テキスト</div>
<svg width="1212" height="1097"><g transform="translate(1157.6,738) rotate(45) scale(1.0)"><circle cx="0" cy="0" r="6.3" fill="#bdbdbd"/><path d="M-8,-3.1 H-1.8 Q1.3,-3.1 1.3,0 Q1.3,3.1 -1.8,3.1 H-8 Z" fill="#232323"/><line x1="0" y1="0" x2="18.6" y2="0" stroke="#bdbdbd" stroke-width="4.6" stroke-linecap="round"/></g></svg>
<div class="dd" style="left:945px;top:770.5px;width:231px;height:31px;border-right:none;border-radius:3px 0 0 3px"></div>
<div class="a" style="left:1150px;top:771px;width:1.5px;height:30px;background:#343434"></div>
<svg width="1212" height="1097"><polyline points="1158.3,783.5 1164.5,789.5 1170.7,783.5" fill="none" stroke="#c0c0c0" stroke-width="1.6"/></svg>
<div class="t" style="left:956px;top:779px;font-size:15.5px;color:#c8c8c8">HG平成角ｺﾞｼｯｸ体W9</div>
<div class="dd" style="left:945px;top:817.5px;width:125px;height:30px"></div>
<div class="t" style="left:956px;top:825px;font-size:16px;color:#c8c8c8">Regular</div>
<svg width="1212" height="1097"><polyline points="1049,830.5 1055.2,836.5 1061.4,830.5" fill="none" stroke="#c0c0c0" stroke-width="1.6"/></svg>
<div class="t" style="left:1101px;top:826px;font-size:16px;color:#2d8ceb">123</div>
<svg width="1212" height="1097"><circle cx="1152.6" cy="833.3" r="6.2" fill="none" stroke="#bdbdbd" stroke-width="2.6"/></svg>
<svg width="1212" height="1097"><rect x="947.9" y="868.4" width="18.6" height="2.2" fill="#2d8ceb"/><rect x="947.9" y="873.1" width="23.5" height="2.2" fill="#2d8ceb"/><rect x="947.9" y="877.7" width="18.6" height="2.2" fill="#2d8ceb"/><rect x="947.9" y="882.4" width="23.5" height="2.2" fill="#2d8ceb"/><rect x="947.9" y="887.0" width="18.6" height="2.2" fill="#2d8ceb"/><rect x="992.5" y="868.4" width="20.6" height="2.2" fill="#c0c0c0"/><rect x="990.0" y="873.1" width="25.5" height="2.2" fill="#c0c0c0"/><rect x="992.5" y="877.7" width="20.6" height="2.2" fill="#c0c0c0"/><rect x="990.0" y="882.4" width="25.5" height="2.2" fill="#c0c0c0"/><rect x="992.5" y="887.0" width="20.6" height="2.2" fill="#c0c0c0"/><rect x="1037.4" y="868.4" width="20.6" height="2.2" fill="#c0c0c0"/><rect x="1033.8" y="873.1" width="24.2" height="2.2" fill="#c0c0c0"/><rect x="1037.4" y="877.7" width="20.6" height="2.2" fill="#c0c0c0"/><rect x="1033.8" y="882.4" width="24.2" height="2.2" fill="#c0c0c0"/><rect x="1037.4" y="887.0" width="20.6" height="2.2" fill="#c0c0c0"/><rect x="1094.7" y="868.4" width="22.3" height="2.2" fill="#555"/><rect x="1094.7" y="873.1" width="22.3" height="2.2" fill="#555"/><rect x="1094.7" y="877.7" width="22.3" height="2.2" fill="#555"/><rect x="1094.7" y="882.4" width="22.3" height="2.2" fill="#555"/><rect x="1094.7" y="887.0" width="15.0" height="2.2" fill="#555"/><rect x="1138.5" y="868.4" width="22.3" height="2.2" fill="#555"/><rect x="1138.5" y="873.1" width="22.3" height="2.2" fill="#555"/><rect x="1138.5" y="877.7" width="22.3" height="2.2" fill="#555"/><rect x="1138.5" y="882.4" width="22.3" height="2.2" fill="#555"/><rect x="1142.1" y="887.0" width="15.0" height="2.2" fill="#555"/><rect x="1183" y="869" width="1.6" height="2" fill="#555"/><rect x="1183" y="874" width="1.6" height="2" fill="#555"/><rect x="1183" y="879" width="1.6" height="2" fill="#555"/><rect x="1183" y="884" width="1.6" height="2" fill="#555"/><rect x="1183" y="889" width="1.6" height="2" fill="#555"/></svg>
<svg width="1212" height="1097">
<rect x="944.5" y="912.6" width="28.8" height="17" fill="#c8c8c8"/>
<path d="M945,935.8 H972.8 M945,935.8 L949,932.3 M945,935.8 L949,939.3 M972.8,935.8 L968.8,932.3 M972.8,935.8 L968.8,939.3" fill="none" stroke="#c8c8c8" stroke-width="1.6"/>
<path d="M1065.5,935.8 H1078 M1065.5,935.8 L1069,932.8 M1065.5,935.8 L1069,938.8" fill="none" stroke="#c8c8c8" stroke-width="1.6"/>
<path d="M1063.5,911.8 H1071 M1063.5,937.8 H1071 M1067.3,914 V935.5 M1067.3,914 L1064.3,918 M1067.3,914 L1070.3,918 M1067.3,935.5 L1064.3,931.5 M1067.3,935.5 L1070.3,931.5" fill="none" stroke="none"/>
<path d="M1161.5,922 V934 M1161.5,920 L1159,924.5 H1164 Z M1161.5,936 L1159,931.5 H1164 Z" fill="#c8c8c8" stroke="#c8c8c8" stroke-width="1.5"/>
<rect x="1167" y="924.2" width="17.3" height="1.5" fill="#c8c8c8"/><rect x="1167" y="936.4" width="17.3" height="1.5" fill="#c8c8c8"/>
</svg>
<div class="t" style="left:945.5px;top:913px;font-size:17px;font-weight:bold;color:#232323;letter-spacing:-1.5px">VA</div>
<div class="t" style="left:1051.5px;top:913px;font-size:18px;color:#c8c8c8;letter-spacing:-2.5px">V/A</div>
<div class="t" style="left:1170px;top:911px;font-size:13px;color:#c8c8c8">A</div>
<div class="t" style="left:1170px;top:923.5px;font-size:13px;color:#c8c8c8">A</div>
<div class="t" style="left:980.5px;top:921px;font-size:14.5px;color:#2d8ceb">0</div>
<div class="t" style="left:1086.5px;top:921px;font-size:14.5px;color:#2d8ceb">0</div>
<div class="t" style="left:954.4px;top:961px;font-family:'Liberation Serif',serif;color:#c8c8c8;font-size:24px;font-weight:bold;transform:scaleX(1.16);transform-origin:0 0">T</div>
<div class="t" style="left:992px;top:961px;font-family:'Liberation Serif',serif;color:#c8c8c8;font-size:24px;font-style:italic;transform:scaleX(1.2);transform-origin:0 0">T</div>
<div class="t" style="left:1032px;top:961px;font-family:'Liberation Serif',serif;color:#c8c8c8;font-size:24px;font-weight:bold;letter-spacing:-2px">TT</div>
<div class="t" style="left:1069px;top:961px;font-family:'Liberation Serif',serif;color:#c8c8c8;font-size:24px;font-weight:bold">T<span style="font-size:17px">T</span></div>
<div class="t" style="left:1117px;top:961px;font-family:'Liberation Serif',serif;color:#c8c8c8;font-size:24px;font-weight:bold">T<span style="font-size:11px;vertical-align:top;position:relative;top:2px">1</span></div>
<div class="t" style="left:1154px;top:961px;font-family:'Liberation Serif',serif;color:#c8c8c8;font-size:24px;font-weight:bold">T<span style="font-size:11px;position:relative;top:2px">1</span></div>
<div class="a" style="left:929px;top:1004px;width:255px;height:2px;background:#1a1a1a"></div>
<div class="t" style="left:934px;top:1033px;font-size:16px;color:#9a9a9a">アピアランス</div>
<svg width="1212" height="1097"><g transform="translate(1157.6,1034.5) rotate(45) scale(1.0)"><circle cx="0" cy="0" r="6.3" fill="#bdbdbd"/><path d="M-8,-3.1 H-1.8 Q1.3,-3.1 1.3,0 Q1.3,3.1 -1.8,3.1 H-8 Z" fill="#232323"/><line x1="0" y1="0" x2="18.6" y2="0" stroke="#bdbdbd" stroke-width="4.6" stroke-linecap="round"/></g></svg>
<div class="t" style="left:946px;top:1083px;font-size:16px;color:#9a9a9a">塗り</div>
</body></html>
